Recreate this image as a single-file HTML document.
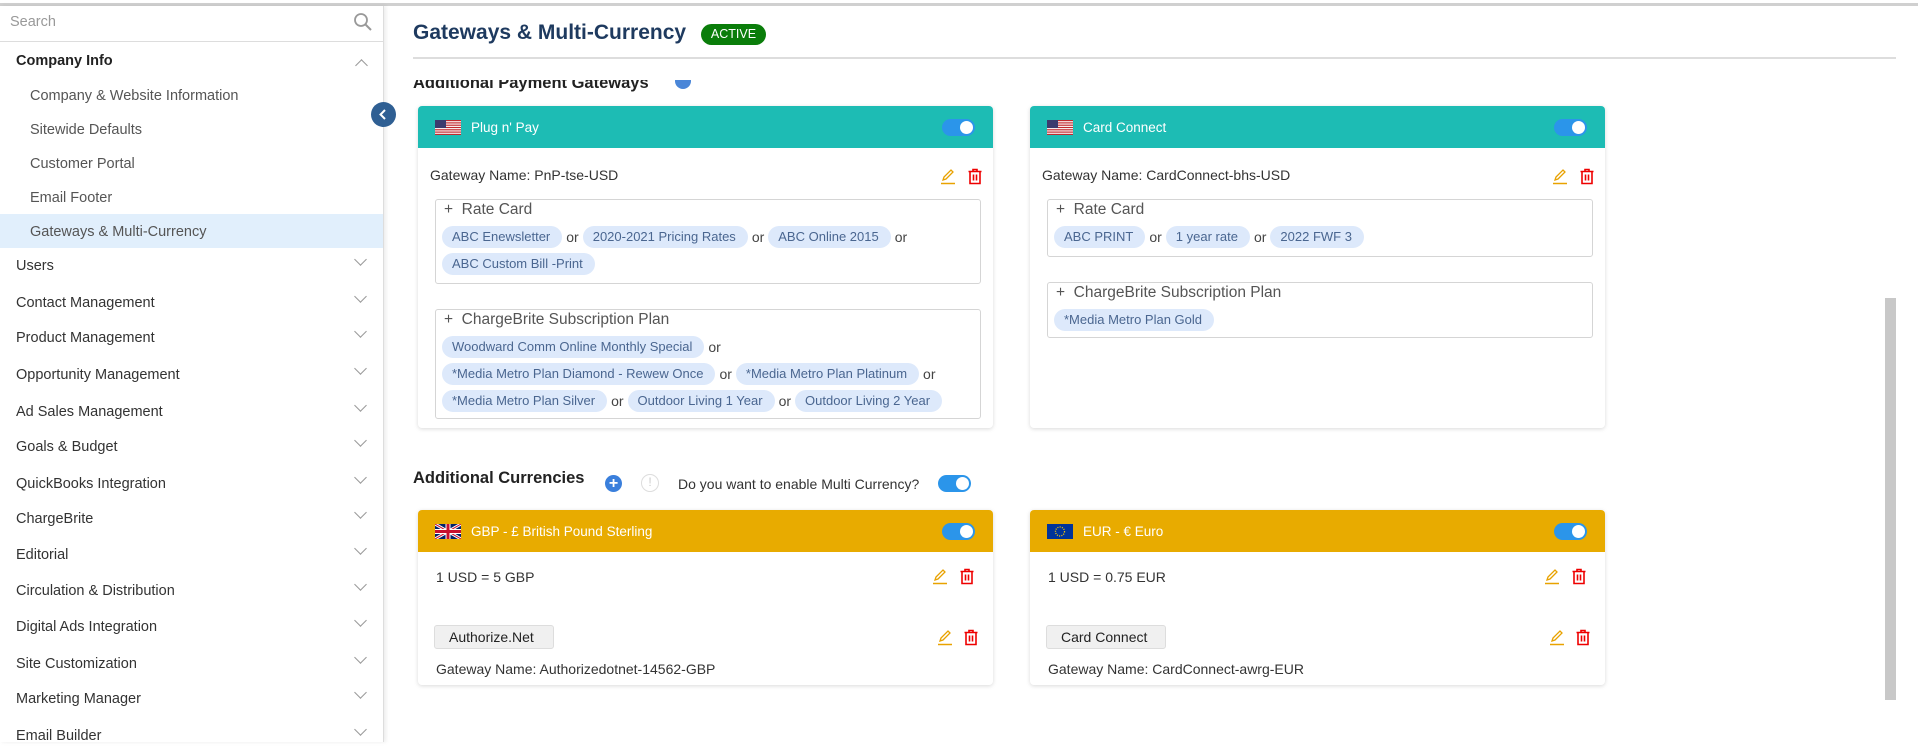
<!DOCTYPE html>
<html><head><meta charset="utf-8"><style>
*{box-sizing:border-box;margin:0;padding:0}
body{width:1918px;height:742px;overflow:hidden;background:#fff;font-family:"Liberation Sans",sans-serif;color:#333;position:relative}
.abs{position:absolute}
.topline{left:0;top:3px;width:1918px;height:3px;background:#d0d0d0}
.side{left:0;top:6px;width:384px;height:736px;border-right:1px solid #ddd;box-shadow:2px 0 4px rgba(0,0,0,.08)}
.si{position:absolute;left:0;width:383px;font-size:14.5px;color:#333;line-height:20px}
.chev{position:absolute;left:356px;width:9px;height:9px;border-right:1.5px solid #999;border-bottom:1.5px solid #999;transform:rotate(45deg)}
.card{position:absolute;width:575px;background:#fff;border-radius:4px;box-shadow:0 1px 4px rgba(0,0,0,.15);overflow:hidden}
.hd{height:42px;position:relative;color:#fff;font-size:13.5px}
.hd .t{position:absolute;left:53px;top:14px}
.flag{position:absolute;left:17px;top:14px;width:26px;height:15px}
.tog{position:absolute;right:18px;top:13px;width:33px;height:17px;border-radius:9px;background:#2b95ea}
.tog:after{content:"";position:absolute;right:2px;top:2px;width:13px;height:13px;border-radius:50%;background:#fff}
.txt{position:absolute;font-size:14px;color:#333}
.box{position:absolute;border:1px solid #d5d5d5;border-radius:3px}
.bt{position:absolute;left:8px;top:1px;font-size:15.5px;color:#555}
.row{position:absolute;left:6px;font-size:14px;color:#444;white-space:nowrap;display:flex;align-items:center}
.chip{display:inline-block;height:22px;line-height:22px;border-radius:11px;background:#dde9fb;color:#4a6690;font-size:13px;padding:0 12px 0 10px}
.or{margin:0 4px}
.ic{position:absolute;width:16px;height:17px}
.btn{position:absolute;height:24px;line-height:22px;border:1px solid #ddd;border-radius:3px;background:#f0f0f0;font-size:14px;color:#222;padding:0 14px 0 14px}
</style></head><body>
<div class="abs topline"></div>
<div class="abs side">
 <div class="abs" style="left:10px;top:8px;font-size:14.5px;color:#999">Search</div>
 <svg class="abs" style="left:353px;top:6px" width="20" height="20" viewBox="0 0 20 20"><circle cx="8" cy="8" r="6" fill="none" stroke="#999" stroke-width="1.8"/><path d="M12.5 12.5L18 18" stroke="#999" stroke-width="2"/></svg>
 <div class="abs" style="left:0;top:35px;width:383px;height:1px;background:#ddd"></div>
 <div class="si" style="top:45px;left:16px;font-weight:bold;color:#222">Company Info</div>
 <div class="abs" style="left:357px;top:55px;width:9px;height:9px;border-left:1.5px solid #999;border-top:1.5px solid #999;transform:rotate(45deg)"></div>
 <div class="si" style="top:80px;left:30px;color:#555">Company &amp; Website Information</div>
 <div class="si" style="top:114px;left:30px;color:#555">Sitewide Defaults</div>
 <div class="si" style="top:148px;left:30px;color:#555">Customer Portal</div>
 <div class="si" style="top:182px;left:30px;color:#555">Email Footer</div>
 <div class="abs" style="left:0;top:208px;width:383px;height:34px;background:#e1effc"></div>
 <div class="si" style="top:216px;left:30px;color:#555">Gateways &amp; Multi-Currency</div>
 <div class="si" style="top:250px;left:16px">Users</div><div class="chev" style="top:249px"></div>
 <div class="si" style="top:287px;left:16px">Contact Management</div><div class="chev" style="top:286px"></div>
 <div class="si" style="top:322px;left:16px">Product Management</div><div class="chev" style="top:321px"></div>
 <div class="si" style="top:359px;left:16px">Opportunity Management</div><div class="chev" style="top:358px"></div>
 <div class="si" style="top:396px;left:16px">Ad Sales Management</div><div class="chev" style="top:395px"></div>
 <div class="si" style="top:431px;left:16px">Goals &amp; Budget</div><div class="chev" style="top:430px"></div>
 <div class="si" style="top:468px;left:16px">QuickBooks Integration</div><div class="chev" style="top:467px"></div>
 <div class="si" style="top:503px;left:16px">ChargeBrite</div><div class="chev" style="top:502px"></div>
 <div class="si" style="top:539px;left:16px">Editorial</div><div class="chev" style="top:538px"></div>
 <div class="si" style="top:575px;left:16px">Circulation &amp; Distribution</div><div class="chev" style="top:574px"></div>
 <div class="si" style="top:611px;left:16px">Digital Ads Integration</div><div class="chev" style="top:610px"></div>
 <div class="si" style="top:648px;left:16px">Site Customization</div><div class="chev" style="top:647px"></div>
 <div class="si" style="top:683px;left:16px">Marketing Manager</div><div class="chev" style="top:682px"></div>
 <div class="si" style="top:720px;left:16px">Email Builder</div><div class="chev" style="top:719px"></div>
</div>
<div class="abs" style="left:371px;top:102px;width:25px;height:25px;border-radius:50%;background:#2f5f93"><svg width="25" height="25" viewBox="0 0 25 25"><path d="M14 8l-4.5 4.5L14 17" fill="none" stroke="#fff" stroke-width="2"/></svg></div>

<div class="abs" style="left:413px;top:21px;font-size:21px;font-weight:bold;color:#1e3a5f">Gateways &amp; Multi-Currency</div>
<div class="abs" style="left:701px;top:24px;width:65px;height:21px;border-radius:11px;background:#0a7d0a;color:#fff;font-size:12.5px;text-align:center;line-height:21px">ACTIVE</div>
<div class="abs" style="left:413px;top:57px;width:1483px;height:1.5px;background:#ddd"></div>

<div class="abs" style="left:0;top:80px;width:1918px;height:662px;overflow:hidden">
 <div class="abs" style="left:413px;top:-7px;font-size:16.5px;line-height:20px;font-weight:bold;color:#222">Additional Payment Gateways</div>
 <div class="abs" style="left:675px;top:-7px;width:16px;height:16px;border-radius:50%;background:#4a86d8"></div>
</div>

<!-- card 1 -->
<div class="card" style="left:418px;top:106px;height:322px">
 <div class="hd" style="background:#1dbcb4"><svg class="flag" viewBox="0 0 26 15"><rect width="26" height="15" fill="#fff"/><g fill="#c0292f"><rect y="0" width="26" height="1.2"/><rect y="2.3" width="26" height="1.2"/><rect y="4.6" width="26" height="1.2"/><rect y="6.9" width="26" height="1.2"/><rect y="9.2" width="26" height="1.2"/><rect y="11.5" width="26" height="1.2"/><rect y="13.8" width="26" height="1.2"/></g><rect width="11" height="8" fill="#3c3b6e"/></svg><span class="t">Plug n' Pay</span><div class="tog"></div></div>
 <div class="txt" style="left:12px;top:61px">Gateway Name: PnP-tse-USD</div>
 <svg class="ic" style="left:522px;top:62px" viewBox="0 0 16 17"><path d="M3 12l1-3 7-7 2 2-7 7z" fill="none" stroke="#e8a200" stroke-width="1.3"/><path d="M1 15.5h14" stroke="#e8a200" stroke-width="1.5"/></svg>
 <svg class="ic" style="left:549px;top:62px" viewBox="0 0 16 17"><path d="M1.5 3.5h13M6 3.5V1.5h4v2M3 3.5v12h10v-12M6.5 6.5v6M9.5 6.5v6" fill="none" stroke="#e00" stroke-width="1.6"/></svg>
 <div class="box" style="left:17px;top:93px;width:546px;height:85px"><div class="bt">+&nbsp; Rate Card</div>
  <div class="row" style="top:26px"><span class="chip">ABC Enewsletter</span><span class="or">or</span><span class="chip">2020-2021 Pricing Rates</span><span class="or">or</span><span class="chip">ABC Online 2015</span><span class="or">or</span></div>
  <div class="row" style="top:53px"><span class="chip">ABC Custom Bill -Print</span></div></div>
 <div class="box" style="left:17px;top:203px;width:546px;height:110px"><div class="bt">+&nbsp; ChargeBrite Subscription Plan</div>
  <div class="row" style="top:26px"><span class="chip">Woodward Comm Online Monthly Special</span><span class="or">or</span></div>
  <div class="row" style="top:53px"><span class="chip">*Media Metro Plan Diamond - Rewew Once</span><span class="or">or</span><span class="chip">*Media Metro Plan Platinum</span><span class="or">or</span></div>
  <div class="row" style="top:80px"><span class="chip">*Media Metro Plan Silver</span><span class="or">or</span><span class="chip">Outdoor Living 1 Year</span><span class="or">or</span><span class="chip">Outdoor Living 2 Year</span></div></div>
</div>

<!-- card 2 -->
<div class="card" style="left:1030px;top:106px;height:322px">
 <div class="hd" style="background:#1dbcb4"><svg class="flag" viewBox="0 0 26 15"><rect width="26" height="15" fill="#fff"/><g fill="#c0292f"><rect y="0" width="26" height="1.2"/><rect y="2.3" width="26" height="1.2"/><rect y="4.6" width="26" height="1.2"/><rect y="6.9" width="26" height="1.2"/><rect y="9.2" width="26" height="1.2"/><rect y="11.5" width="26" height="1.2"/><rect y="13.8" width="26" height="1.2"/></g><rect width="11" height="8" fill="#3c3b6e"/></svg><span class="t">Card Connect</span><div class="tog"></div></div>
 <div class="txt" style="left:12px;top:61px">Gateway Name: CardConnect-bhs-USD</div>
 <svg class="ic" style="left:522px;top:62px" viewBox="0 0 16 17"><path d="M3 12l1-3 7-7 2 2-7 7z" fill="none" stroke="#e8a200" stroke-width="1.3"/><path d="M1 15.5h14" stroke="#e8a200" stroke-width="1.5"/></svg>
 <svg class="ic" style="left:549px;top:62px" viewBox="0 0 16 17"><path d="M1.5 3.5h13M6 3.5V1.5h4v2M3 3.5v12h10v-12M6.5 6.5v6M9.5 6.5v6" fill="none" stroke="#e00" stroke-width="1.6"/></svg>
 <div class="box" style="left:17px;top:93px;width:546px;height:58px"><div class="bt">+&nbsp; Rate Card</div>
  <div class="row" style="top:26px"><span class="chip">ABC PRINT</span><span class="or">or</span><span class="chip">1 year rate</span><span class="or">or</span><span class="chip">2022 FWF 3</span></div></div>
 <div class="box" style="left:17px;top:176px;width:546px;height:56px"><div class="bt">+&nbsp; ChargeBrite Subscription Plan</div>
  <div class="row" style="top:26px"><span class="chip">*Media Metro Plan Gold</span></div></div>
</div>

<div class="abs" style="left:413px;top:469px;font-size:16.5px;font-weight:bold;color:#222">Additional Currencies</div>
<div class="abs" style="left:605px;top:475px;width:17px;height:17px;border-radius:50%;background:#3a7fdc;color:#fff;text-align:center;line-height:17px;font-size:16px;font-weight:bold">+</div>
<div class="abs" style="left:641px;top:474px;width:18px;height:18px;border-radius:50%;border:1.5px solid #ddd;color:#ccc;text-align:center;line-height:15px;font-size:12px">!</div>
<div class="abs" style="left:678px;top:476px;font-size:14px;color:#333">Do you want to enable Multi Currency?</div>
<div class="abs" style="left:938px;top:475px;width:33px;height:17px;border-radius:9px;background:#2b95ea"><div style="position:absolute;right:2px;top:2px;width:13px;height:13px;border-radius:50%;background:#fff"></div></div>

<!-- currency cards -->
<div class="card" style="left:418px;top:510px;height:175px">
 <div class="hd" style="background:#e8ab00"><svg class="flag" viewBox="0 0 26 15"><rect width="26" height="15" fill="#012169"/><path d="M0 0L26 15M26 0L0 15" stroke="#fff" stroke-width="3"/><path d="M0 0L26 15M26 0L0 15" stroke="#c8102e" stroke-width="1"/><path d="M13 0v15M0 7.5h26" stroke="#fff" stroke-width="5"/><path d="M13 0v15M0 7.5h26" stroke="#c8102e" stroke-width="3"/></svg><span class="t">GBP - £ British Pound Sterling</span><div class="tog"></div></div>
 <div class="txt" style="left:18px;top:59px">1 USD = 5 GBP</div>
 <svg class="ic" style="left:514px;top:58px" viewBox="0 0 16 17"><path d="M3 12l1-3 7-7 2 2-7 7z" fill="none" stroke="#e8a200" stroke-width="1.3"/><path d="M1 15.5h14" stroke="#e8a200" stroke-width="1.5"/></svg>
 <svg class="ic" style="left:541px;top:58px" viewBox="0 0 16 17"><path d="M1.5 3.5h13M6 3.5V1.5h4v2M3 3.5v12h10v-12M6.5 6.5v6M9.5 6.5v6" fill="none" stroke="#e00" stroke-width="1.6"/></svg>
 <div class="btn" style="left:16px;top:115px;width:120px">Authorize.Net</div>
 <svg class="ic" style="left:519px;top:119px" viewBox="0 0 16 17"><path d="M3 12l1-3 7-7 2 2-7 7z" fill="none" stroke="#e8a200" stroke-width="1.3"/><path d="M1 15.5h14" stroke="#e8a200" stroke-width="1.5"/></svg>
 <svg class="ic" style="left:545px;top:119px" viewBox="0 0 16 17"><path d="M1.5 3.5h13M6 3.5V1.5h4v2M3 3.5v12h10v-12M6.5 6.5v6M9.5 6.5v6" fill="none" stroke="#e00" stroke-width="1.6"/></svg>
 <div class="txt" style="left:18px;top:151px">Gateway Name: Authorizedotnet-14562-GBP</div>
</div>

<div class="card" style="left:1030px;top:510px;height:175px">
 <div class="hd" style="background:#e8ab00"><svg class="flag" viewBox="0 0 26 15"><rect width="26" height="15" fill="#039"/><circle cx="13" cy="7.5" r="4.5" fill="none" stroke="#fc0" stroke-width="1.3" stroke-dasharray="1 1.3"/></svg><span class="t">EUR - € Euro</span><div class="tog"></div></div>
 <div class="txt" style="left:18px;top:59px">1 USD = 0.75 EUR</div>
 <svg class="ic" style="left:514px;top:58px" viewBox="0 0 16 17"><path d="M3 12l1-3 7-7 2 2-7 7z" fill="none" stroke="#e8a200" stroke-width="1.3"/><path d="M1 15.5h14" stroke="#e8a200" stroke-width="1.5"/></svg>
 <svg class="ic" style="left:541px;top:58px" viewBox="0 0 16 17"><path d="M1.5 3.5h13M6 3.5V1.5h4v2M3 3.5v12h10v-12M6.5 6.5v6M9.5 6.5v6" fill="none" stroke="#e00" stroke-width="1.6"/></svg>
 <div class="btn" style="left:16px;top:115px;width:120px">Card Connect</div>
 <svg class="ic" style="left:519px;top:119px" viewBox="0 0 16 17"><path d="M3 12l1-3 7-7 2 2-7 7z" fill="none" stroke="#e8a200" stroke-width="1.3"/><path d="M1 15.5h14" stroke="#e8a200" stroke-width="1.5"/></svg>
 <svg class="ic" style="left:545px;top:119px" viewBox="0 0 16 17"><path d="M1.5 3.5h13M6 3.5V1.5h4v2M3 3.5v12h10v-12M6.5 6.5v6M9.5 6.5v6" fill="none" stroke="#e00" stroke-width="1.6"/></svg>
 <div class="txt" style="left:18px;top:151px">Gateway Name: CardConnect-awrg-EUR</div>
</div>

<div class="abs" style="left:1885px;top:298px;width:11px;height:402px;background:#c8c8c8"></div>
</body></html>
